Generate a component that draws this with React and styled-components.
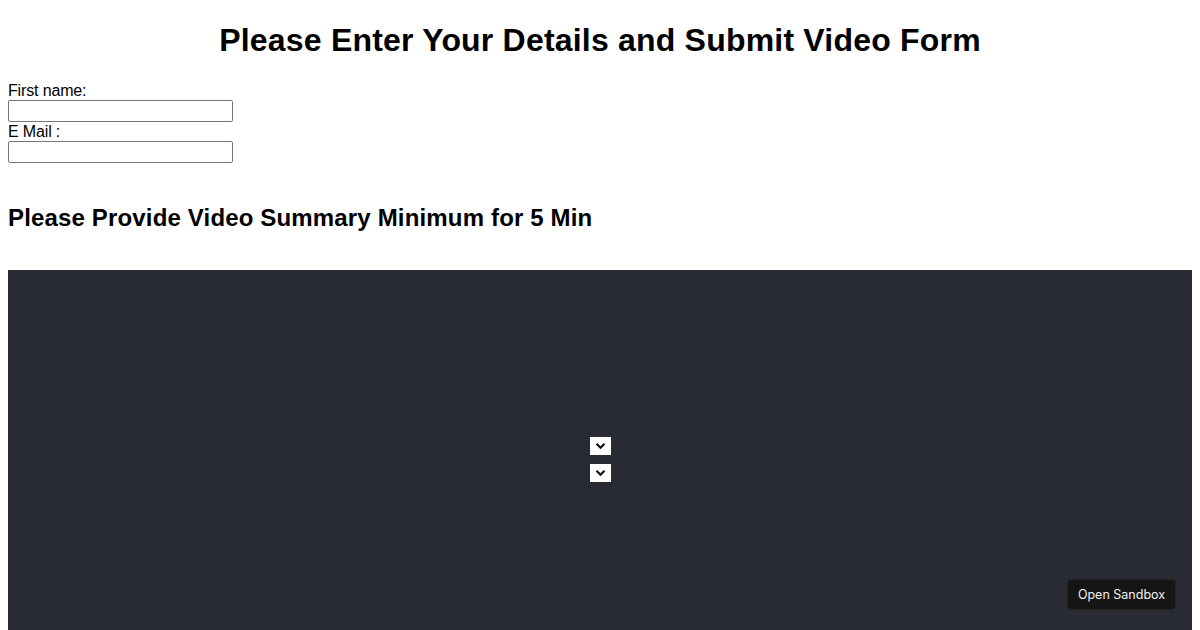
import React from 'react'
import styled, { createGlobalStyle } from 'styled-components'

const GlobalStyle = createGlobalStyle`
  body {
    margin: 8px;
    font-family: "Liberation Sans", Arial, sans-serif;
    color: #000;
    background: #fff;
  }
`;

const Title = styled.h1`
  text-align: center;
  font-size: 32px;
  font-weight: bold;
  letter-spacing: 0.2px;
  margin: 13.5px 0 23.44px;
`;

const Form = styled.form`
  display: flex;
  flex-direction: column;
  align-items: flex-start;
`;

const Label = styled.label`
  font-size: 16px;
  line-height: 18px;
  letter-spacing: -0.15px;
`;

const Input = styled.input`
  width: 225px;
  height: 22px;
  box-sizing: border-box;
  border: 1px solid #767676;
  border-radius: 2px;
  padding: 1px 2px;
  margin: 0 0 ${({ $gap }) => $gap || 0}px;
`;

const SubTitle = styled.h2`
  font-size: 24px;
  font-weight: bold;
  letter-spacing: 0.16px;
  margin: 41px 0 38px;
  line-height: 27.6px;
`;

const Panel = styled.div`
  position: relative;
  height: 380px;
  background: #282b34;
  display: flex;
  flex-direction: column;
  align-items: center;
  justify-content: center;
  gap: 9px;
  box-sizing: border-box;
`;

const Picker = styled.div`
  width: 21px;
  height: 18px;
  background: #fff;
  display: flex;
  align-items: center;
  justify-content: center;
`;

const SandboxButton = styled.button`
  position: absolute;
  right: 16px;
  bottom: 40px;
  width: 109px;
  height: 31px;
  background: #151515;
  border: 1px solid #232323;
  border-radius: 4px;
  color: #f2f2f2;
  font-family: Inter, "Liberation Sans", sans-serif;
  font-size: 12.5px;
  cursor: pointer;
`;

const Chevron = () => (
  <svg width="11" height="8" viewBox="0 0 11 8">
    <path d="M1.5 1.8 L5.5 5.8 L9.5 1.8" fill="none" stroke="#111" strokeWidth="2.2" />
  </svg>
);

const App = () => {
  return (
    <>
      <GlobalStyle />
      <Title>Please Enter Your Details and Submit Video Form</Title>
      <Form>
        <Label htmlFor="fname">First name:</Label>
        <Input id="fname" type="text" $gap={1} />
        <Label htmlFor="email">E Mail :</Label>
        <Input id="email" type="text" />
      </Form>
      <SubTitle>Please Provide Video Summary Minimum for 5 Min</SubTitle>
      <Panel>
        <Picker><Chevron /></Picker>
        <Picker><Chevron /></Picker>
        <SandboxButton>Open Sandbox</SandboxButton>
      </Panel>
    </>
  )
}

export default App
